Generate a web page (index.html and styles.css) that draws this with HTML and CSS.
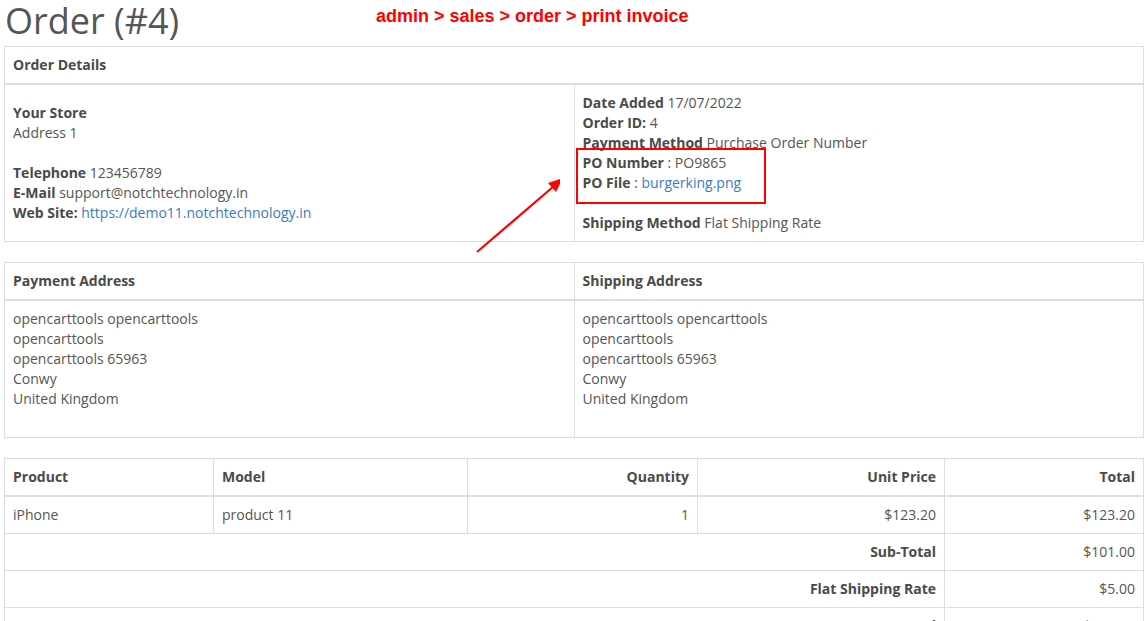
FILE: index.html
```html
<!DOCTYPE html>
<html>

<head>
    <title>Order (#4)</title>
    <link rel="stylesheet" href="styles.css">
</head>

<body>
    <div class="container">
        <h1 class="title">Order (#4)</h1>
        <span class="note">admin &gt; sales &gt; order &gt; print invoice</span>

        <table class="table">
            <thead>
                <tr>
                    <td colspan="2"><b>Order Details</b></td>
                </tr>
            </thead>
            <tbody>
                <tr>
                    <td class="half middle">
                        <div class="address"><b>Your Store</b><br>Address 1</div>
                        <b>Telephone</b> 123456789<br>
                        <b>E-Mail</b> support@notchtechnology.in<br>
                        <b>Web Site:</b> <a href="#">https://demo11.notchtechnology.in</a>
                    </td>
                    <td class="half">
                        <b>Date Added</b> 17/07/2022<br>
                        <b>Order ID:</b> 4<br>
                        <b>Payment Method</b> Purchase Order Number<br>
                        <div class="po">
                            <b>PO Number</b> : PO9865<br>
                            <b>PO File</b> : <a href="#">burgerking.png</a>
                            <span class="marker"></span>
                        </div>
                        <br>
                        <b>Shipping Method</b> Flat Shipping Rate
                    </td>
                </tr>
            </tbody>
        </table>

        <table class="table">
            <thead>
                <tr>
                    <td class="half"><b>Payment Address</b></td>
                    <td class="half"><b>Shipping Address</b></td>
                </tr>
            </thead>
            <tbody>
                <tr>
                    <td>
                        <div class="address">opencarttools opencarttools<br>opencarttools<br>opencarttools 65963<br>Conwy<br>United Kingdom</div>
                    </td>
                    <td>
                        <div class="address">opencarttools opencarttools<br>opencarttools<br>opencarttools 65963<br>Conwy<br>United Kingdom</div>
                    </td>
                </tr>
            </tbody>
        </table>

        <table class="table products">
            <thead>
                <tr>
                    <td class="c1"><b>Product</b></td>
                    <td class="c2"><b>Model</b></td>
                    <td class="c3 right"><b>Quantity</b></td>
                    <td class="c4 right"><b>Unit Price</b></td>
                    <td class="right"><b>Total</b></td>
                </tr>
            </thead>
            <tbody>
                <tr>
                    <td>iPhone</td>
                    <td>product 11</td>
                    <td class="right">1</td>
                    <td class="right">$123.20</td>
                    <td class="right">$123.20</td>
                </tr>
                <tr>
                    <td class="right" colspan="4"><b>Sub-Total</b></td>
                    <td class="right">$101.00</td>
                </tr>
                <tr>
                    <td class="right" colspan="4"><b>Flat Shipping Rate</b></td>
                    <td class="right">$5.00</td>
                </tr>
                <tr>
                    <td class="right" colspan="4"><b>Total</b></td>
                    <td class="right">$106.00</td>
                </tr>
            </tbody>
        </table>
    </div>

    <svg class="arrow" width="100" height="90" viewBox="0 0 100 90">
        <line x1="17" y1="82" x2="94" y2="16" stroke="#ff0000" stroke-width="2.2" />
        <polygon points="103,8 88,13 96,22" fill="#ff0000" />
    </svg>
</body>

</html>
```

FILE: styles.css
```css
* {
    box-sizing: border-box;
}

body {
    margin: 0;
    font-family: "Open Sans", sans-serif;
    font-size: 14px;
    line-height: 20px;
    color: #555;
}

b {
    color: #4a4a4a;
}

a {
    color: #3a7bbf;
    text-decoration: none;
}

.container {
    position: relative;
    width: 1144px;
    padding: 0 0 0 4px;
}

.title {
    margin: 0 0 5px 1px;
    font-size: 36px;
    line-height: 41px;
    font-weight: 400;
    color: #555;
}

.note {
    position: absolute;
    left: 376px;
    top: 6px;
    font-family: "Liberation Sans", Arial, sans-serif;
    font-weight: bold;
    font-size: 18px;
    line-height: 21px;
    color: #ff0000;
}

.table {
    width: 100%;
    border-collapse: collapse;
    margin-bottom: 20px;
    table-layout: fixed;
}

.table td {
    border: 1px solid #ddd;
    padding: 8px;
    vertical-align: top;
}

.table thead td {
    border-bottom: 2px solid #ddd;
}

.half {
    width: 50%;
}

.middle {
    vertical-align: middle !important;
}

.address {
    margin-bottom: 20px;
}

.po {
    position: relative;
}

.marker {
    position: absolute;
    left: -7px;
    top: -5px;
    width: 190px;
    height: 56px;
    border: 2px solid #ff0000;
}

.right {
    text-align: right;
}

.products .c1 {
    width: 209px;
}

.products .c2 {
    width: 254px;
}

.products .c3 {
    width: 230px;
}

.products .c4 {
    width: 247px;
}

.arrow {
    position: absolute;
    left: 460px;
    top: 170px;
}
```
